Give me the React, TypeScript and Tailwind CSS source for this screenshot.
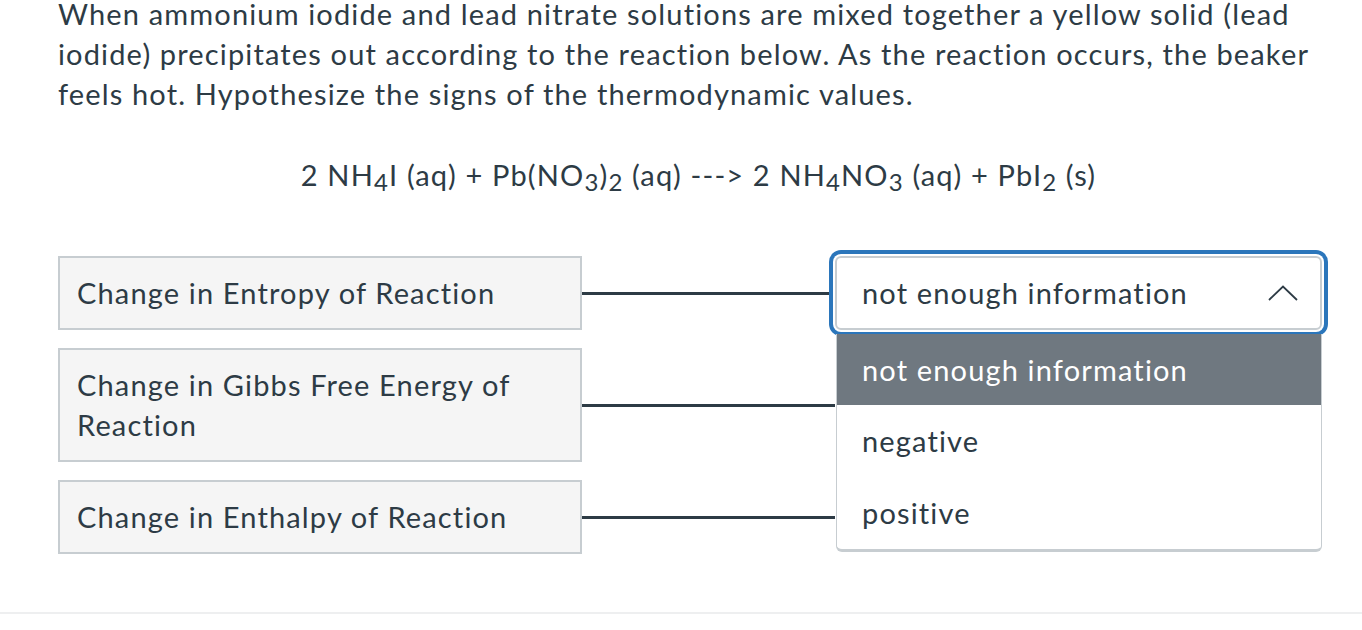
import React from "react";

const Sub = ({ children }: { children: React.ReactNode }) => (
  <span className="text-[24px] leading-none align-[-5px]">{children}</span>
);

function LeftBox({ children }: { children: React.ReactNode }) {
  return (
    <div className="w-[524px] shrink-0 border-2 border-[#c7cdd1] bg-[#f5f5f5] pl-[17px] pr-[10px] py-[15px] text-[29px] leading-[40px]">
      {children}
    </div>
  );
}

function Connector() {
  return <div className="w-[253px] shrink-0 h-[3px] bg-[#2d3b45]" />;
}

function ChevronUp() {
  return (
    <svg width="30" height="16" viewBox="0 0 30 16" fill="none">
      <path d="M1 15 L15 1.5 L29 15" stroke="#2d3b45" strokeWidth="1.8" />
    </svg>
  );
}

export default function App() {
  return (
    <div
      className="w-[1362px] h-[630px] overflow-hidden bg-white text-[#2d3b45] tracking-[1.15px]"
      style={{ fontFamily: "Lato, 'Noto Sans', sans-serif" }}
    >
      <div className="pl-[58px] pr-[23px]">
        <p className="-mt-[6px] text-[29px] leading-[40px]">
          When ammonium iodide and lead nitrate solutions are mixed together a yellow solid (lead
          iodide) precipitates out according to the reaction below. As the reaction occurs, the
          beaker feels hot. Hypothesize the signs of the thermodynamic values.
        </p>
        <p className="mt-[41px] text-center text-[29px] leading-[40px]">
          2 NH<Sub>4</Sub>I (aq) + Pb(NO<Sub>3</Sub>)<Sub>2</Sub> (aq) ---&gt; 2 NH<Sub>4</Sub>NO
          <Sub>3</Sub> (aq) + PbI<Sub>2</Sub> (s)
        </p>

        <div className="mt-[61px] flex flex-col gap-[18px]">
          <div className="flex items-center">
            <LeftBox>Change in Entropy of Reaction</LeftBox>
            <Connector />
            <div className="relative w-[487px] shrink-0">
              <div className="h-[74px] flex items-center justify-between rounded-[6px] border-2 border-[#c7cdd1] bg-white pl-[25px] pr-[22px] text-[29px] shadow-[0_0_0_2px_#ffffff,0_0_0_6px_#2b76bb]">
                <span>not enough information</span>
                <ChevronUp />
              </div>
              <div className="absolute left-[1px] top-[78px] w-[486px] z-10 bg-white border border-[#c7cdd1] border-t-0 border-b-[3px] rounded-b-[6px] text-[29px] leading-[40px]">
                <div className="h-[71px] flex items-center pl-[25px] bg-[#6f7880] text-white">
                  not enough information
                </div>
                <div className="h-[72px] flex items-center pl-[25px]">negative</div>
                <div className="h-[72px] flex items-center pl-[25px]">positive</div>
              </div>
            </div>
          </div>
          <div className="flex items-center">
            <LeftBox>
              Change in Gibbs Free Energy of
              <br />
              Reaction
            </LeftBox>
            <Connector />
          </div>
          <div className="flex items-center">
            <LeftBox>Change in Enthalpy of Reaction</LeftBox>
            <Connector />
          </div>
        </div>
      </div>
      <div className="mt-[58px] h-[2px] w-full bg-[#eeeff0]" />
    </div>
  );
}
